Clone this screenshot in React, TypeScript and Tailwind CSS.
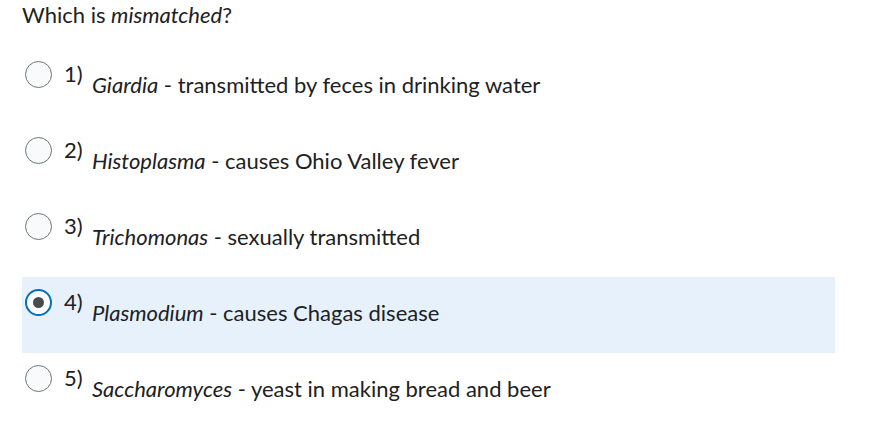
import React from "react";

const options = [
  { n: "1)", name: "Giardia", rest: " - transmitted by feces in drinking water", selected: false },
  { n: "2)", name: "Histoplasma", rest: " - causes Ohio Valley fever", selected: false },
  { n: "3)", name: "Trichomonas", rest: " - sexually transmitted", selected: false },
  { n: "4)", name: "Plasmodium", rest: " - causes Chagas disease", selected: true },
  { n: "5)", name: "Saccharomyces", rest: " - yeast in making bread and beer", selected: false },
];

export default function App() {
  return (
    <div className="w-[876px] h-[429px] bg-white text-[#202122] overflow-hidden" style={{ fontFamily: "Lato, 'Noto Sans', sans-serif" }}>
      <div className="pl-[22px] pt-[1px] h-[49px] text-[22px] leading-[28px]">
        Which is <i>mismatched</i>?
      </div>
      <div className="flex flex-col pl-[22px] w-[835px]">
        {options.map((o) => (
          <div key={o.n} className={`flex h-[76px] items-start pt-[12px] pl-[3px] ${o.selected ? "bg-[#e6f1fc]" : ""}`}>
            {o.selected ? (
              <div className="w-[27px] h-[27px] rounded-full border-2 border-[#006fbf] bg-white flex items-center justify-center shrink-0">
                <div className="w-[11px] h-[11px] rounded-full bg-[#494c4e]" />
              </div>
            ) : (
              <div className="w-[27px] h-[27px] rounded-full border border-[#6e7376] bg-[#f9fafb] shrink-0" />
            )}
            <div className="ml-[12px] w-[28px] text-[22px] leading-[26px] shrink-0">{o.n}</div>
            <div className="pt-[10px] text-[22px] leading-[28px]">
              <i>{o.name}</i>{o.rest}
            </div>
          </div>
        ))}
      </div>
    </div>
  );
}
